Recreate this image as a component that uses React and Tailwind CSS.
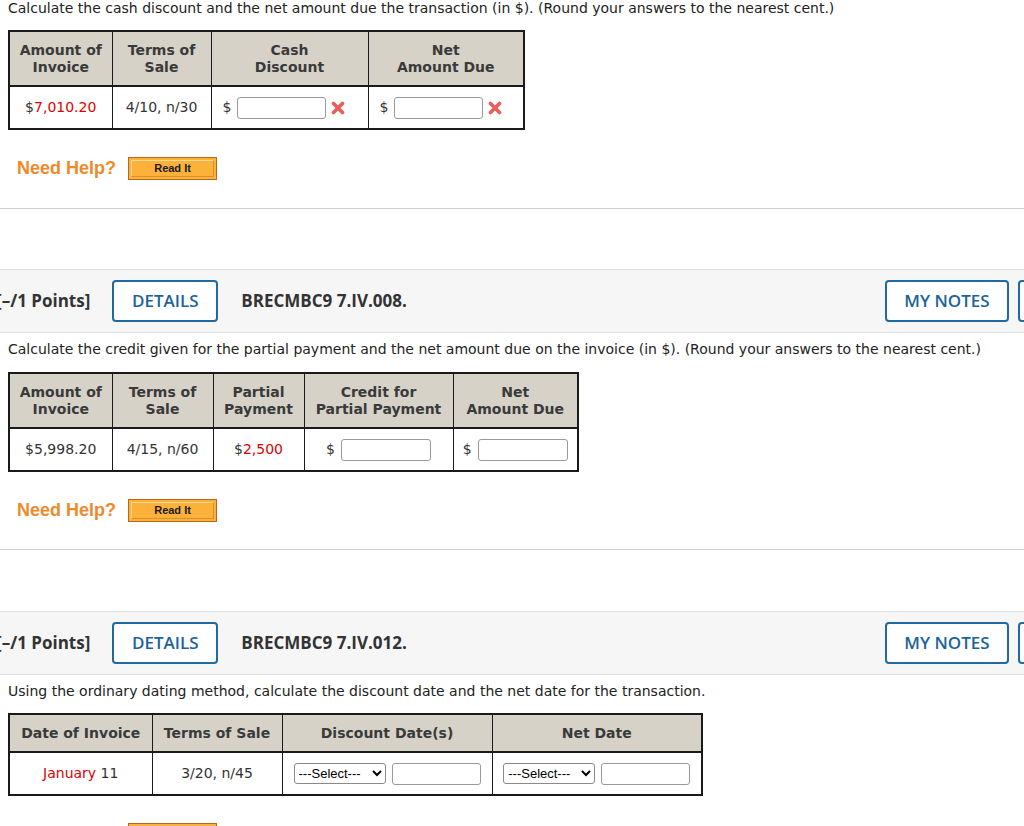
import React from "react";

const BODY = { fontFamily: '"DejaVu Sans", Verdana, sans-serif' };
const OPEN = { fontFamily: '"Open Sans", sans-serif' };
const ARIAL = { fontFamily: '"Liberation Sans", Arial, sans-serif' };

function XMark() {
  return (
    <svg width="14" height="14" viewBox="0 0 14 14" className="ml-[5px] shrink-0">
      <path d="M2.5 2.5 L11.5 11.5 M11.5 2.5 L2.5 11.5" stroke="#ee5b5b" strokeWidth="3.6" strokeLinecap="round" />
    </svg>
  );
}

function TextInput({ w = 89 }) {
  return (
    <input
      type="text"
      className="h-[22px] border border-[#9a9a9a] rounded-[3px] bg-white outline-none"
      style={{ width: w }}
    />
  );
}

function Money({ x, w = 89, center }) {
  return (
    <div className={"flex items-center " + (center ? "justify-center" : "pl-[11px]")}>
      <span className="text-[#333] mr-[6px]">$</span>
      <TextInput w={w} />
      {x && <XMark />}
    </div>
  );
}

function Select() {
  return (
    <select
      className="h-[21px] w-[92px] border border-[#8a8a8a] rounded-[3px] bg-white text-[13px] text-black"
      style={ARIAL}
      defaultValue=""
    >
      <option value="">---Select---</option>
    </select>
  );
}

function Th({ children, w }) {
  return (
    <th
      className="border border-[#1a1a1a] border-b-2 bg-[#d6d2c8] text-[#3a3a3a] font-bold text-[14px] leading-[17px] text-center align-middle px-1"
      style={{ width: w }}
    >
      {children}
    </th>
  );
}

function Td({ children, w, left }) {
  return (
    <td
      className={
        "border border-[#1a1a1a] text-[14px] text-[#333] align-middle p-0 " +
        (left ? "text-left" : "text-center")
      }
      style={{ width: w }}
    >
      {children}
    </td>
  );
}

function DataTable({ heads, cells, widths, headH }) {
  return (
    <table className="border-collapse border-2 border-[#1a1a1a] table-fixed" style={BODY}>
      <thead>
        <tr style={{ height: headH }}>
          {heads.map((h, i) => (
            <Th key={i} w={widths[i]}>
              {h}
            </Th>
          ))}
        </tr>
      </thead>
      <tbody>
        <tr className="h-[43px]">
          {cells.map((c, i) => (
            <Td key={i} w={widths[i]} left={c.left}>
              {c.content}
            </Td>
          ))}
        </tr>
      </tbody>
    </table>
  );
}

function NeedHelp() {
  return (
    <div className="flex items-center h-[24px] pl-[17px]">
      <span className="text-[18px] font-bold text-[#ee8a2a] leading-none" style={ARIAL}>
        Need Help?
      </span>
      <button
        className="ml-[12px] w-[89px] h-[23px] border border-[#b9661d] bg-[#fbb13a] p-[2px] flex"
        style={ARIAL}
      >
        <span className="flex-1 border border-[#ffd891] border-b-[#d9902c] border-r-[#d9902c] flex items-center justify-center text-[11px] font-bold text-[#1a1a1a] leading-none">
          Read It
        </span>
      </button>
    </div>
  );
}

function Header({ code }) {
  return (
    <div className="h-[64px] bg-[#f6f6f6] border-y border-[#dedede] flex items-center overflow-hidden" style={OPEN}>
      <span className="ml-[-4px] text-[17px] font-bold text-[#333] whitespace-nowrap">[–/1 Points]</span>
      <button className="ml-[22px] w-[106px] h-[42px] border-2 border-[#1f6aa0] rounded-[4px] text-[17px] font-semibold text-[#1c6399] bg-white">
        DETAILS
      </button>
      <span className="ml-[23px] text-[17px] font-bold text-[#333]">{code}</span>
      <div className="flex-1" />
      <button className="w-[124px] h-[42px] border-2 border-[#1f6aa0] rounded-[4px] text-[17px] font-semibold text-[#1c6399] bg-white">
        MY NOTES
      </button>
      <div className="ml-[9px] mr-[-40px] w-[46px] h-[42px] border-2 border-[#1f6aa0] rounded-[4px] bg-white shrink-0" />
    </div>
  );
}

function Prompt({ children }) {
  return (
    <p className="pl-[8px] text-[14px] leading-[17px] text-[#222]" style={BODY}>
      {children}
    </p>
  );
}

function SelectPair() {
  return (
    <div className="flex items-center justify-center gap-[6px]">
      <Select />
      <TextInput w={89} />
    </div>
  );
}

export default function App() {
  return (
    <div className="w-[1024px] h-[826px] overflow-hidden bg-white">
      {/* Question 1 (continued) */}
      <div>
        <Prompt>
          Calculate the cash discount and the net amount due the transaction (in $). (Round your answers to the nearest cent.)
        </Prompt>
        <div className="pl-[8px] mt-[13px]">
          <DataTable
            headH={55}
            widths={[103, 99, 157, 156]}
            heads={[
              <>Amount of<br />Invoice</>,
              <>Terms of<br />Sale</>,
              <>Cash<br />Discount</>,
              <>Net<br />Amount Due</>,
            ]}
            cells={[
              { content: <>$<span className="text-[#e00000]">7,010.20</span></> },
              { content: "4/10, n/30" },
              { content: <Money x />, left: true },
              { content: <Money x />, left: true },
            ]}
          />
        </div>
        <div className="mt-[26px]">
          <NeedHelp />
        </div>
        <div className="mt-[28px] border-t border-[#cfcfcf]" />
      </div>

      <div className="h-[60px]" />

      {/* Question 2 */}
      <Header code="BRECMBC9 7.IV.008." />
      <div className="pt-[8px]">
        <Prompt>
          Calculate the credit given for the partial payment and the net amount due on the invoice (in $). (Round your answers to the nearest cent.)
        </Prompt>
        <div className="pl-[8px] mt-[14px]">
          <DataTable
            headH={55}
            widths={[103, 101, 91, 149, 125]}
            heads={[
              <>Amount of<br />Invoice</>,
              <>Terms of<br />Sale</>,
              <>Partial<br />Payment</>,
              <>Credit for<br />Partial Payment</>,
              <>Net<br />Amount Due</>,
            ]}
            cells={[
              { content: "$5,998.20" },
              { content: "4/15, n/60" },
              { content: <>$<span className="text-[#e00000]">2,500</span></> },
              { content: <Money w={90} center />, left: true },
              { content: <Money w={90} center />, left: true },
            ]}
          />
        </div>
        <div className="mt-[26px]">
          <NeedHelp />
        </div>
        <div className="mt-[27px] border-t border-[#cfcfcf]" />
      </div>

      <div className="h-[61px]" />

      {/* Question 3 */}
      <Header code="BRECMBC9 7.IV.012." />
      <div className="pt-[8px]">
        <Prompt>
          Using the ordinary dating method, calculate the discount date and the net date for the transaction.
        </Prompt>
        <div className="pl-[8px] mt-[13px]">
          <DataTable
            headH={38}
            widths={[143, 130, 210, 210]}
            heads={["Date of Invoice", "Terms of Sale", "Discount Date(s)", "Net Date"]}
            cells={[
              { content: <><span className="text-[#e00000]">January</span> 11</> },
              { content: "3/20, n/45" },
              { content: <SelectPair />, left: true },
              { content: <SelectPair />, left: true },
            ]}
          />
        </div>
        <div className="mt-[26px]">
          <NeedHelp />
        </div>
      </div>
    </div>
  );
}
